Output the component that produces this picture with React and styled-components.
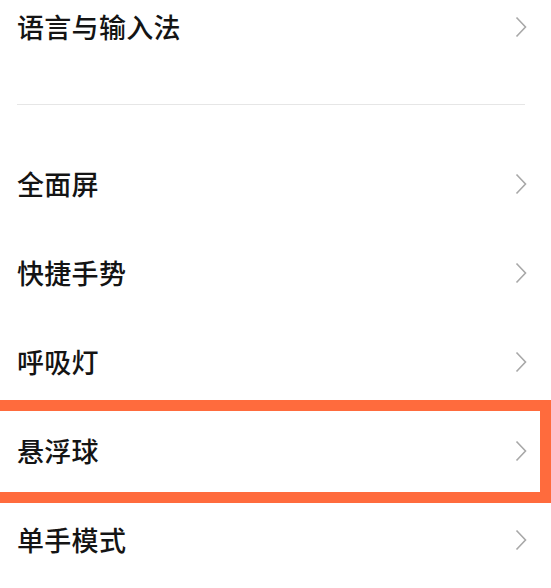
import React from "react";
import styled, { createGlobalStyle } from "styled-components";

const Global = createGlobalStyle`
  html, body { margin: 0; padding: 0; background: #ffffff; overflow: hidden; }
  body { font-family: "Noto Sans CJK SC", "Noto Sans", sans-serif; }
`;

const Page = styled.div`
  width: 551px;
  height: 588px;
  overflow: hidden;
  background: #fff;
`;

const List = styled.div`
  display: flex;
  flex-direction: column;
  margin-top: -18px;
`;

const Row = styled.div`
  position: relative;
  height: 89px;
  display: flex;
  align-items: center;
  justify-content: space-between;
  padding: 0 24px 0 17px;
`;

const Label = styled.span`
  font-size: 27px;
  font-weight: 500;
  color: #141414;
  letter-spacing: 0.3px;
`;

const Divider = styled.div`
  height: 1px;
  background: #e6e6e6;
  margin: 33px 26px 34px 17px;
`;

const Highlight = styled.div`
  position: absolute;
  top: -6px;
  bottom: -8px;
  left: -20px;
  right: 0;
  border: 11px solid #ff6b3d;
  pointer-events: none;
`;

const Chevron = () => (
  <svg width="12" height="22" viewBox="0 0 12 22">
    <polyline points="1.5,1.5 10.5,11 1.5,20.5" fill="none" stroke="#a8a8a8" strokeWidth="1.6" />
  </svg>
);

const Item = ({ label, highlighted }) => (
  <Row>
    <Label>{label}</Label>
    <Chevron />
    {highlighted && <Highlight />}
  </Row>
);

export default function App() {
  return (
    <Page>
      <Global />
      <List>
        <Item label="语言与输入法" />
        <Divider />
        <Item label="全面屏" />
        <Item label="快捷手势" />
        <Item label="呼吸灯" />
        <Item label="悬浮球" highlighted />
        <Item label="单手模式" />
      </List>
    </Page>
  );
}
